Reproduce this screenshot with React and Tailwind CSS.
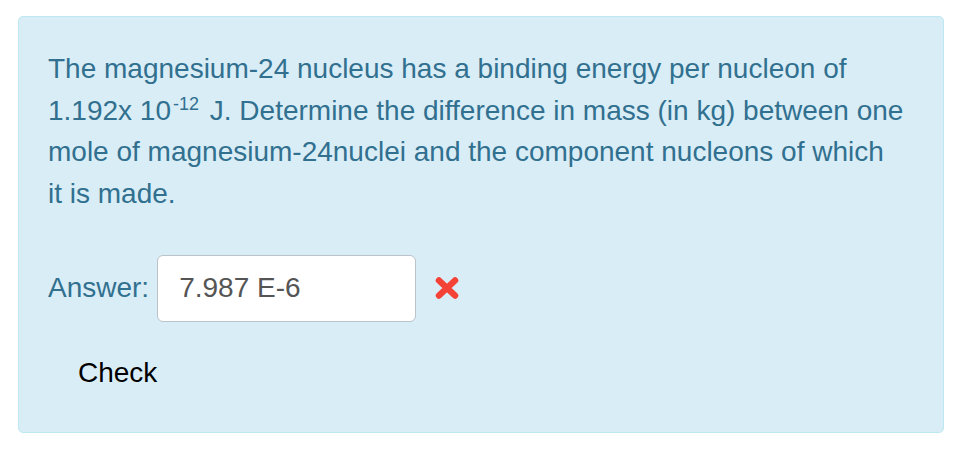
export default function App() {
  return (
    <div className="w-[967px] h-[469px] bg-white pt-[16px] pl-[18px]" style={{ fontFamily: '"Liberation Sans", Arial, sans-serif' }}>
      <div className="w-[926px] h-[417px] bg-[#d9edf7] border border-[#bce8f1] rounded-[5px] text-[#31708f] pl-[29px] pr-[30px] pt-[31px]">
        <p className="text-[28px] leading-[41.7px] w-[866px]">
          The magnesium-24 nucleus has a binding energy per nucleon of 1.192x 10
          <sup className="text-[18px] top-[-10px] ml-[2px] mr-[3px]">-12</sup> J. Determine the difference in mass (in kg) between one mole of
          magnesium-24nuclei and the component nucleons of which
          <br />
          it is made.
        </p>
        <div className="flex items-center mt-[40px]">
          <span className="text-[28px] mr-[8px]">Answer:</span>
          <input
            readOnly
            value="7.987 E-6"
            className="w-[259px] h-[67px] bg-white border border-[#b9c3c9] rounded-[6px] px-[21px] text-[28px] text-[#555] outline-none"
          />
          <svg className="ml-[19px]" width="24" height="22" viewBox="0 0 24 22">
            <path d="M4 3.5 L20 18.5 M20 3.5 L4 18.5" stroke="#f44336" strokeWidth="6.5" strokeLinecap="round" />
          </svg>
        </div>
        <button className="mt-[30px] ml-[30px] text-[28px] leading-[42px] text-black bg-transparent">Check</button>
      </div>
    </div>
  );
}
